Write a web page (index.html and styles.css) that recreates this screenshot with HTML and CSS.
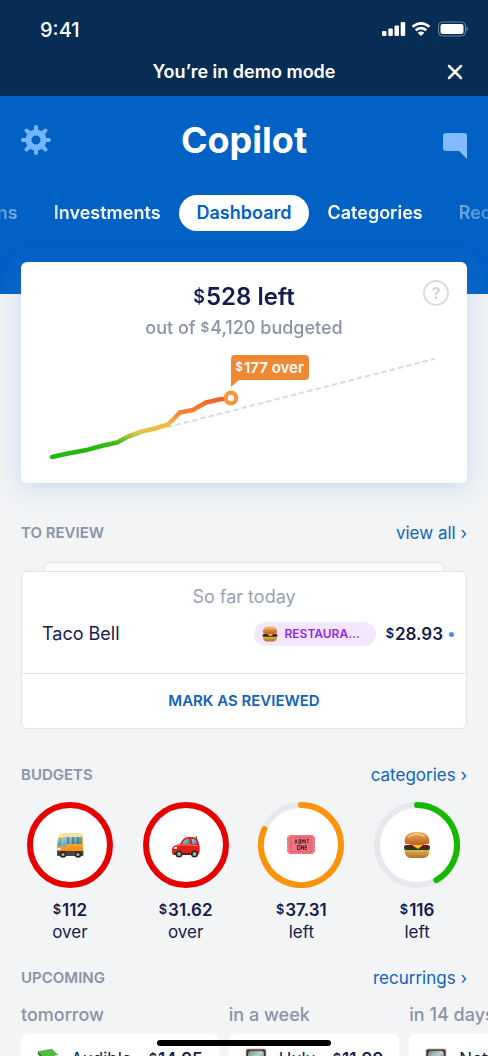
FILE: index.html
```html
<!DOCTYPE html>
<html lang="en">
<head>
<meta charset="utf-8">
<meta name="viewport" content="width=device-width, initial-scale=1">
<title>Copilot</title>
<link rel="stylesheet" href="styles.css">
</head>
<body>
<svg class="defs" aria-hidden="true">
  <defs>
    <linearGradient id="bun" x1="0" y1="0" x2="0" y2="1"><stop offset="0" stop-color="#eeb05d"/><stop offset="1" stop-color="#bb6a28"/></linearGradient>
    <linearGradient id="busBody" x1="0" y1="0" x2="0" y2="1"><stop offset="0" stop-color="#ffcf3e"/><stop offset="1" stop-color="#f08a14"/></linearGradient>
    <linearGradient id="glass" x1="0" y1="0" x2="1" y2="1"><stop offset="0" stop-color="#9fd3e2"/><stop offset="1" stop-color="#37849f"/></linearGradient>
    <linearGradient id="screen" x1="0" y1="0" x2="1" y2="1"><stop offset="0" stop-color="#6e8a86"/><stop offset=".5" stop-color="#b9cfca"/><stop offset="1" stop-color="#5f7a77"/></linearGradient>
  </defs>
  <symbol id="burger" viewBox="0 0 28 28">
    <path d="M2 18h24v3c0 4-3 6-7 6H9c-4 0-7-2-7-6z" fill="url(#bun)"/>
    <path d="M1 18c2-2 24-2 26 0 0 3-2 3-4 2s-3 2-5 1-3 1-5 0-3 1-5 0-7 2-7-3z" fill="#9ed33a"/>
    <rect x="1" y="14" width="26" height="5" rx="2.5" fill="#4b2616"/>
    <path d="M2 12h24l-6 2-5 4-6-4z" fill="#ffc52e"/>
    <path d="M2 11h24v1.600q-12 3-24 0z" fill="#e2512b"/>
    <path d="M1.500 11C1.500 4 6 1 14 1s12.500 3 12.500 10c-4 2-21 2-25 0z" fill="url(#bun)"/>
    <path d="M6 6c3-3 10-4 15-1" stroke="#f8cd8a" stroke-width="1.500" fill="none" stroke-linecap="round"/>
  </symbol>
  <symbol id="bus" viewBox="0 0 28 28">
    <path d="M3 5c0-2 2-3 6-3h13c4 0 5 1 5 3v3H3z" fill="#f7e3a0"/>
    <path d="M2 6h25v14H1v-6z" fill="url(#busBody)"/>
    <path d="M2.500 7h3L5 15H1.500z" fill="url(#glass)"/>
    <path d="M6.500 6h19.500v7H11l-2 3H6z" fill="url(#glass)"/>
    <path d="M12 6v7M17 6v7M22 6v7" stroke="#3b5460"/>
    <path d="M1 20h26.500v4q0 1-1 1H2q-1 0-1-1z" fill="#4a423e"/>
    <path d="M1.500 18h3" stroke="#fff3c4" stroke-width="2"/>
    <circle cx="7" cy="23.500" r="3.300" fill="#262628"/><circle cx="7" cy="23.500" r="1.600" fill="#aaa"/>
    <circle cx="22" cy="23.500" r="3.300" fill="#262628"/><circle cx="22" cy="23.500" r="1.600" fill="#aaa"/>
  </symbol>
  <symbol id="car" viewBox="0 0 28 28">
    <path d="M24 5l1 5" stroke="#444" stroke-width="1"/>
    <path d="M0 19c0-4 3-5 8-6 3-6 5-7 10-7 6 0 8 1 9 7 1 3 1 6 0 10l-3 1H3c-3 0-3-2-3-5z" fill="#df2018"/>
    <path d="M10 13c2-4 3-5 7-5l1 5.500z" fill="url(#glass)"/>
    <path d="M19.500 8c4 0 5 1 5.500 5l-4.500.5z" fill="url(#glass)"/>
    <path d="M3 15c7-2 16-1 23 0" stroke="#ff7b6c" fill="none"/>
    <path d="M2 17h3" stroke="#ffe9ca" stroke-width="2"/>
    <path d="M2 23h24" stroke="#63201c" stroke-width="2"/>
    <circle cx="7" cy="23" r="3.500" fill="#29292b"/><circle cx="7" cy="23" r="1.900" fill="#aaa"/>
    <circle cx="22.500" cy="23" r="3.500" fill="#29292b"/><circle cx="22.500" cy="23" r="1.900" fill="#aaa"/>
  </symbol>
  <symbol id="ticket" viewBox="0 0 28 28">
    <path d="M2 4h24q0 2 2 2v3q-1 1 0 2v2q-1 1 0 2v2q-1 1 0 2v2q-2 0-2 2H2q0-2-2-2v-2q1-1 0-2v-2q1-1 0-2v-2q1-1 0-2V6q2 0 2-2z" fill="#f0747f"/>
    <rect x="4" y="6.500" width="20" height="14" fill="none" stroke="#dd5f6d"/>
    <path d="M8 12.500l1-4 1 4M12 8.500v4h1.500v-4zM15 12.500v-4l1 2 1-2v4M18.500 8.500v4M20 8.500h2M21 8.500v4M10.500 14.500v4H13v-4zM14.500 18.500v-4l2 4v-4M20 14.500h-2v4h2M18 16.500h2" fill="none" stroke="#592431" stroke-width="1"/>
  </symbol>
  <symbol id="books" viewBox="0 0 28 28">
    <path d="M1 4L19 1l8 8-17 4z" fill="#54b848"/><path d="M10 13l17-4v3l-17 4z" fill="#f4f1e4"/><path d="M1 4v4l9 8v-3z" fill="#267d2d"/>
    <path d="M2 11l8 7 17-5v5l-17 4-9-7z" fill="#a8402f"/>
    <path d="M2 17l8 6 16-4v4l-16 4-9-7z" fill="#347fc0"/>
  </symbol>
  <symbol id="tv" viewBox="0 0 28 28">
    <rect x="1" y="1" width="26" height="23" rx="3" fill="#8d6a58"/>
    <rect x="2.500" y="2.500" width="23" height="18" rx="2" fill="#342f2d"/>
    <rect x="4" y="3.500" width="20" height="15" rx="4" fill="url(#screen)"/>
    <path d="M5 24h4l-1 3H6zM19 24h4l-1 3h-2z" fill="#59392e"/>
  </symbol>
</svg>

<div class="app">
  <div class="system">
    <div class="status">
      <time>9:41</time>
      <svg class="status-icons" viewBox="0 0 88 18" role="img" aria-label="Signal, Wi-Fi and battery">
        <g fill="#fff">
          <rect x="2" y="10" width="4.500" height="5" rx="1"/><rect x="8.300" y="7.500" width="4.500" height="7.500" rx="1"/><rect x="14.500" y="4.500" width="4.500" height="10.500" rx="1"/><rect x="20.700" y="1" width="4.500" height="14" rx="1"/>
          <path d="M37.600 11.700q3.400-2.400 6.800 0L41 15z"/>
        </g>
        <path d="M32.500 5.800q8.500-7 17 0M35.700 9.300q5.300-4.200 10.600 0" fill="none" stroke="#fff" stroke-width="2.700"/>
        <rect x="58.500" y="1" width="27" height="14" rx="4" fill="none" stroke="#71859b"/>
        <rect x="60.500" y="3" width="23" height="10" rx="2" fill="#fff"/>
        <path d="M86.500 5.500q3 2.500 0 5z" fill="#71859b"/>
      </svg>
    </div>
    <div class="demo">
      <p>You’re in demo mode</p>
      <button class="icon-btn" aria-label="Close"><svg width="16" height="16" viewBox="0 0 16 16"><path d="M2 2l12 12M14 2L2 14" stroke="#fff" stroke-width="2.500" stroke-linecap="round"/></svg></button>
    </div>
  </div>

  <header class="header">
    <div class="title-row">
      <button class="icon-btn" aria-label="Settings">
        <svg width="30" height="30" viewBox="-15 -15 30 30"><g stroke="#73b5ff" stroke-width="4" stroke-linecap="round"><path d="M0-8v-5M0 8v5M-8 0h-5M8 0h5M-6-6l-3.500-3.500M6-6l3.500-3.500M-6 6l-3.500 3.500M6 6l3.500 3.500"/></g><circle r="7.500" fill="none" stroke="#73b5ff" stroke-width="6"/></svg>
      </button>
      <h1>Copilot</h1>
      <button class="icon-btn messages" aria-label="Messages">
        <svg width="24" height="40" viewBox="0 -12 24 40"><path d="M3 1h18q3 0 3 3v23l-8-8H3q-3 0-3-3V4q0-3 3-3z" fill="#80bcff"/></svg>
      </button>
    </div>
    <nav class="tabs">
      <div class="tabs-side tabs-before"><a href="#">Transactions</a><a href="#">Investments</a></div>
      <a class="active" href="#" aria-current="page">Dashboard</a>
      <div class="tabs-side"><a href="#">Categories</a><a href="#">Recurrings</a></div>
    </nav>
  </header>

  <main>
    <section class="summary">
      <button class="help" aria-label="Help">?</button>
      <h2><span class="cur">$</span>528 left</h2>
      <p>out of <span class="cur">$</span>4,120 budgeted</p>
      <div class="chart">
        <svg viewBox="0 0 446 133" aria-hidden="true">
          <defs><linearGradient id="spend" gradientUnits="userSpaceOnUse" x1="0" y1="97" x2="0" y2="50">
            <stop offset="0" stop-color="#26b70f"/><stop offset=".12" stop-color="#4dbc1b"/><stop offset=".3" stop-color="#dcc74a"/><stop offset=".5" stop-color="#f5b544"/><stop offset=".7" stop-color="#f58b32"/><stop offset="1" stop-color="#ee632d"/></linearGradient></defs>
          <path d="M147 77L413 9" stroke="#d9dadd" stroke-width="2" stroke-dasharray="4 4.500" stroke-linecap="round"/>
          <path d="M31 107L47 103.500 67 99.700 82 95.500 96 92.500 108 86 121 81.500 134 78.500 147 74.500 159 62.500 172 60 185 52.500 198 49.500 207 48.500" fill="none" stroke="url(#spend)" stroke-width="4.500" stroke-linejoin="round" stroke-linecap="round"/>
          <circle cx="210" cy="48" r="5.300" fill="#fff" stroke="#fa9638" stroke-width="4.200"/>
        </svg>
        <span class="tip"><span class="cur">$</span>177 over</span>
      </div>
    </section>

    <section class="review">
      <div class="section-head"><h2>TO REVIEW</h2><a href="#">view all ›</a></div>
      <div class="behind"></div>
      <div class="review-card">
        <p class="when">So far today</p>
        <div class="txn">
          <span class="merchant">Taco Bell</span>
          <span class="tag"><svg width="16" height="16"><use href="#burger"/></svg>RESTAURA…</span>
          <strong><span class="cur">$</span>28.93</strong>
          <i class="dot"></i>
        </div>
        <button class="mark">MARK AS REVIEWED</button>
      </div>
    </section>

    <section class="budgets">
      <div class="section-head"><h2>BUDGETS</h2><a href="#">categories ›</a></div>
      <div class="rings">
        <div class="budget">
          <svg class="ring" viewBox="0 0 86 86"><circle class="track" cx="43" cy="43" r="40"/><circle class="arc red" cx="43" cy="43" r="40"/><use href="#bus" x="29" y="29" width="28" height="28"/></svg>
          <strong><span class="cur">$</span>112</strong><span>over</span>
        </div>
        <div class="budget">
          <svg class="ring" viewBox="0 0 86 86"><circle class="track" cx="43" cy="43" r="40"/><circle class="arc red" cx="43" cy="43" r="40"/><use href="#car" x="29" y="29" width="28" height="28"/></svg>
          <strong><span class="cur">$</span>31.62</strong><span>over</span>
        </div>
        <div class="budget">
          <svg class="ring" viewBox="0 0 86 86"><circle class="track" cx="43" cy="43" r="40"/><path class="arc orange" d="M43 3A40 40 0 1 1 6.300 27"/><use href="#ticket" x="29" y="29" width="28" height="28"/></svg>
          <strong><span class="cur">$</span>37.31</strong><span>left</span>
        </div>
        <div class="budget">
          <svg class="ring" viewBox="0 0 86 86"><circle class="track" cx="43" cy="43" r="40"/><path class="arc green" d="M43 3A40 40 0 0 1 62.400 78"/><use href="#burger" x="29" y="29" width="28" height="28"/></svg>
          <strong><span class="cur">$</span>116</strong><span>left</span>
        </div>
      </div>
    </section>

    <section class="upcoming">
      <div class="section-head"><h2>UPCOMING</h2><a href="#">recurrings ›</a></div>
      <div class="bills">
        <div class="bill"><h3>tomorrow</h3><div class="bill-card"><svg width="22" height="22"><use href="#books"/></svg><span>Audible</span><strong><span class="cur">$</span>14.95</strong></div></div>
        <div class="bill"><h3>in a week</h3><div class="bill-card"><svg width="22" height="22"><use href="#tv"/></svg><span>Hulu</span><strong><span class="cur">$</span>11.99</strong></div></div>
        <div class="bill"><h3>in 14 days</h3><div class="bill-card"><svg width="22" height="22"><use href="#tv"/></svg><span>Netflix</span><strong><span class="cur">$</span>12.99</strong></div></div>
      </div>
    </section>
  </main>
  <div class="home-bar"></div>
</div>
</body>
</html>
```

FILE: styles.css
```css
* { box-sizing: border-box; margin: 0; padding: 0; }

:root {
  --navy: #082d54;
  --blue: #0161c5;
  --link: #0f64bd;
  --ink: #141c4d;
  --muted: #8b93a7;
  --line: #e2e5ea;
}

body {
  font-family: Inter, "Liberation Sans", sans-serif;
  font-size: 18px;
  line-height: 24px;
  color: var(--ink);
  background: #f2f4f6;
}

a { color: var(--link); text-decoration: none; }
button { font: inherit; border: 0; background: none; cursor: pointer; }
svg { display: block; }
.defs { position: absolute; width: 0; height: 0; }

.app { display: flex; flex-direction: column; height: 100vh; overflow: hidden; }

.cur { font-size: 75%; font-weight: 600; vertical-align: 2px; margin-right: 1px; }

/* Status bar and demo banner */
.system { background: var(--navy); color: #fff; padding: 18px 20px 12px; flex: none; }
.status { display: flex; justify-content: space-between; align-items: center; height: 24px; padding-left: 20px; }
.status time { font-size: 20px; font-weight: 500; }
.status-icons { width: 88px; height: 18px; }
.demo { display: grid; grid-template-columns: 28px 1fr 28px; align-items: center; margin-top: 18px; }
.demo p { grid-column: 2; text-align: center; font-weight: 600; }

.icon-btn { display: flex; align-items: center; justify-content: center; min-width: 30px; }

/* Header */
.header { background: var(--blue); color: #fff; padding: 20px 0 63px; flex: none; }
.title-row { display: flex; align-items: center; justify-content: space-between; padding: 0 21px; height: 48px; }
.title-row h1 { font-size: 36px; line-height: 48px; font-weight: 700; }
.messages { justify-content: flex-end; }

.tabs {
  display: grid;
  grid-template-columns: minmax(0, 1fr) auto minmax(0, 1fr);
  margin-top: 31px;
  mask-image: linear-gradient(to right, rgba(0,0,0,.35), rgba(0,0,0,.5) 20px, #000 76px, #000 calc(100% - 70px), rgba(0,0,0,.45) calc(100% - 30px), rgba(0,0,0,.3));
}
.tabs-side { display: flex; overflow: hidden; }
.tabs-before { justify-content: flex-end; }
.tabs a { color: #fff; font-weight: 600; line-height: 36px; padding: 0 18px; }
.tabs .active { background: #fff; color: var(--blue); border-radius: 18px; }

/* Summary card */
main { flex: 1; min-height: 0; margin-top: -32px; }
.summary {
  position: relative;
  margin: 0 21px;
  padding-top: 20px;
  background: #fff;
  border-radius: 6px;
  box-shadow: 0 4px 24px rgba(70, 140, 210, .25);
  text-align: center;
}
.summary h2 { font-size: 24px; line-height: 30px; font-weight: 600; }
.summary p { margin-top: 3px; color: var(--muted); font-weight: 500; }
.help {
  position: absolute; top: 18px; right: 18px;
  width: 26px; height: 26px;
  border: 2px solid #d9dbe0; border-radius: 50%;
  color: #cfd2d8; font-size: 16px; line-height: 22px; font-weight: 600;
}
.chart { position: relative; margin-top: 10px; }
.chart svg { width: 100%; }
.tip {
  position: absolute; left: 47%; top: 4%;
  padding: 0 5px; border-radius: 4px 4px 4px 0;
  background: #ee8832; color: #fff;
  font-size: 15px; line-height: 25px; font-weight: 600;
}
.tip::after {
  content: ""; position: absolute; left: 0; top: 100%;
  border-top: 7px solid #ee8832; border-right: 8px solid transparent;
}

/* Sections */
.section-head { display: flex; justify-content: space-between; align-items: center; padding: 0 21px; }
.section-head h2 { font-size: 15px; font-weight: 600; color: var(--muted); }
.section-head a { font-size: 17px; }

.review { padding-top: 38px; }
.behind { height: 9px; margin: 17px 44px 0; border: 1px solid var(--line); border-bottom: 0; border-radius: 6px 6px 0 0; background: #fafbfd; }
.review-card { margin: 0 21px; border: 1px solid var(--line); border-radius: 6px; background: #fff; }
.when { padding-top: 13px; text-align: center; color: #9aa0b1; }
.txn { display: flex; align-items: center; padding: 13px 12px 27px 20px; }
.merchant { flex: 1; }
.tag {
  display: flex; align-items: center; gap: 7px;
  height: 24px; padding: 0 16px 0 8px; margin-right: 10px;
  border-radius: 12px; background: #f3e7fe; color: #8f26e6;
  font-size: 12px; font-weight: 600;
}
.txn strong, .budget strong, .bill-card strong { font-size: 17px; font-weight: 600; }
.dot { width: 5px; height: 5px; margin-left: 6px; border-radius: 50%; background: #4793ea; }
.mark { display: block; width: 100%; padding: 15px 0; border-top: 1px solid var(--line); color: var(--link); font-size: 15px; font-weight: 600; }

/* Budgets */
.budgets { padding-top: 34px; }
.rings { display: grid; grid-template-columns: repeat(4, 1fr); padding: 15px 13px 0 12px; }
.budget { display: flex; flex-direction: column; align-items: center; font-size: 17px; line-height: 22px; }
.budget strong { margin-top: 11px; }
.ring { width: 86px; height: 86px; }
.track { fill: #fff; stroke: #e6e8ec; stroke-width: 6; }
.arc { fill: none; stroke-width: 6; stroke-linecap: round; }
.red { stroke: #e70000; }
.orange { stroke: #fc940b; }
.green { stroke: #14b900; }

/* Upcoming */
.upcoming { padding-top: 23px; }
.bills { display: flex; gap: 10px; padding: 13px 0 0 21px; overflow: hidden; }
.bill { flex: none; }
.bill h3 { font-size: 18px; font-weight: 500; color: var(--muted); }
.bill-card { display: flex; align-items: center; margin-top: 7px; padding: 13px 16px; background: #fff; border-radius: 6px; font-size: 17px; }
.bill-card > span { margin: 0 17px 0 12px; }

.home-bar {
  position: fixed; bottom: 10px; left: 50%; transform: translateX(-50%);
  width: 174px; height: 6px; border-radius: 3px; background: #000;
}
```
